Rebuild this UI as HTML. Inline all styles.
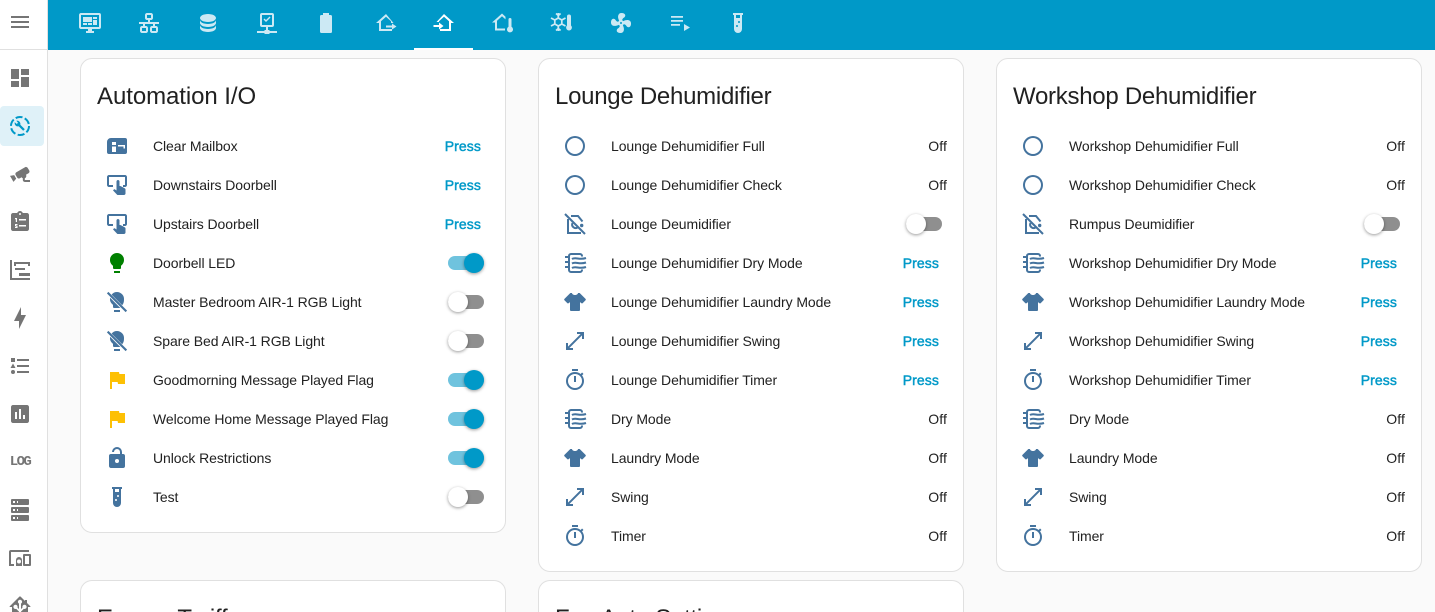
<!DOCTYPE html>
<html lang="en"><head><meta charset="utf-8"><title>Automation I/O</title>
<style>
html,body{margin:0;padding:0;width:1435px;height:612px;overflow:hidden;background:#fafafa;font-family:"Liberation Sans",sans-serif;color:#212121}
#w{position:absolute;left:0;top:0;width:1435px;height:612px;overflow:hidden;background:#fafafa}
#side{position:absolute;left:0;top:0;width:47px;height:612px;background:#fff;border-right:1px solid #e0e0e0;overflow:hidden}
#side svg{position:absolute;left:8px;width:24px;height:24px;fill:#757575}
#sb{position:absolute;left:0;top:49px;width:47px;height:1px;background:#e0e0e0}
#act{position:absolute;left:0;top:106px;width:44px;height:40px;border-radius:4px;background:#dff1f8}
#log{position:absolute;left:8px;top:454px;width:24px;text-align:center;font:bold 14px/16px "Liberation Mono",monospace;letter-spacing:-1.6px;color:#757575}
#ha{position:absolute;left:0;top:594px;width:47px;height:18px;overflow:hidden}
#head{position:absolute;left:48px;top:0;width:1387px;height:50px;background:#0099c8}
#head svg{position:absolute;top:11px;width:24px;height:24px;fill:#cce9f4}
#tab{position:absolute;left:366px;top:48px;width:59px;height:2px;background:#fff}
.c{position:absolute;width:426px;box-sizing:border-box;background:#fff;border:1px solid #e0e0e0;border-radius:12px}
.c.b{top:580px;height:32px;border-bottom:0;border-radius:12px 12px 0 0;overflow:hidden}
.t{position:absolute;left:16px;top:22px;font-size:24px;line-height:32px;white-space:nowrap;letter-spacing:-.27px}
.r{position:absolute;left:0;right:0;height:39px;line-height:39px;font-size:14px}
.r svg{position:absolute;left:24px;top:7px;width:24px;height:24px;fill:#44739e}
.r b{position:absolute;left:72px;font-weight:400;white-space:nowrap;letter-spacing:-.08px}
.r i{position:absolute;right:16px;font-style:normal;letter-spacing:.1px}
.r u{position:absolute;right:24px;text-decoration:none;color:#0099c8;-webkit-text-stroke:.45px #0099c8;letter-spacing:.1px}
.s{position:absolute;right:21px;top:12px;width:36px;height:14px;border-radius:7px;background:#8f8f8f}
.s:after{content:"";position:absolute;left:0;top:-3px;width:20px;height:20px;border-radius:50%;background:#fff;box-shadow:0 1px 3px rgba(0,0,0,.4)}
.s.on{background:#6fc3de}
.s.on:after{left:16px;background:#0099c8}
</style></head><body>
<div id="w">
<svg width="0" height="0" style="position:absolute"><defs>
<symbol id="mail" viewBox="0 0 24 24"><path fill-rule="evenodd" d="M6 4H20A2 2 0 0 1 22 6V18A2 2 0 0 1 20 20H4A2 2 0 0 1 2 18V8A4 4 0 0 1 6 4ZM7 8V11H11V8ZM7 12.500V18H11V12.500ZM13 11V12.500H18.500V14.500H20V11Z"/></symbol>
<symbol id="tap" viewBox="0 0 24 24"><path d="M20 2H4C2.900 2 2 2.900 2 4V12C2 13.110 2.900 14 4 14H8V12H4V4H20V12H18V14H20C21.130 14 22 13.090 22 12V4C22 2.900 21.110 2 20 2Z"/><path d="M20.500 20.500C20.470 21.320 19.820 21.970 19 22H13C12.620 22 12.260 21.850 12 21.570L8 17.370L8.740 16.600C8.930 16.390 9.200 16.280 9.500 16.280H9.700L11.500 17.500V8.500C11.500 7.700 12.200 7 13 7S14.500 7.700 14.500 8.500V13L15.700 13.100L19.650 15.290C20.180 15.530 20.500 16.060 20.500 16.640Z"/></symbol>
<symbol id="bulb" viewBox="0 0 24 24"><path d="M12 2A7 7 0 0 0 5 9C5 11.380 6.190 13.470 8 14.740V17A1 1 0 0 0 9 18H15A1 1 0 0 0 16 17V14.740C17.810 13.470 19 11.380 19 9A7 7 0 0 0 12 2ZM9 20V22H15V20Z"/></symbol>
<symbol id="bulboff" viewBox="0 0 24 24"><path d="M12 2A7 7 0 0 0 6.600 4.600L17.200 15.200C18.300 13.900 19 12.500 19 9.500A7 7 0 0 0 12 2ZM5.100 7.700C4.500 10.800 6 13.300 8 14.740V17A1 1 0 0 0 9 18H15.300ZM9 20V22H15V20Z"/><path d="M3.400 1.900L22.100 20.600L20.600 22.100L1.900 3.400Z"/></symbol>
<symbol id="flag" viewBox="0 0 24 24"><path d="M14.400 6L14 4H5V21H7V14H12.600L13 16H20V6Z"/></symbol>
<symbol id="lock" viewBox="0 0 24 24"><path d="M18 8A2 2 0 0 1 20 10V20A2 2 0 0 1 18 22H6C4.890 22 4 21.100 4 20V10A2 2 0 0 1 6 8H15V6A3 3 0 0 0 12 3A3 3 0 0 0 9 6H7A5 5 0 0 1 12 1A5 5 0 0 1 17 6V8ZM12 17A2 2 0 0 0 14 15A2 2 0 0 0 12 13A2 2 0 0 0 10 15A2 2 0 0 0 12 17Z"/></symbol>
<symbol id="tube" viewBox="0 0 24 24"><path d="M7 2V4H8V18A4 4 0 0 0 12 22A4 4 0 0 0 16 18V4H17V2ZM11 16C10.400 16 10 15.600 10 15C10 14.400 10.400 14 11 14C11.600 14 12 14.400 12 15C12 15.600 11.600 16 11 16ZM13 12C12.400 12 12 11.600 12 11C12 10.400 12.400 10 13 10C13.600 10 14 10.400 14 11C14 11.600 13.600 12 13 12ZM14 7H10V4H14Z"/></symbol>
<symbol id="circ" viewBox="0 0 24 24"><path d="M12 20A8 8 0 0 1 4 12A8 8 0 0 1 12 4A8 8 0 0 1 20 12A8 8 0 0 1 12 20ZM12 2A10 10 0 0 0 2 12A10 10 0 0 0 12 22A10 10 0 0 0 22 12A10 10 0 0 0 12 2Z"/></symbol>
<symbol id="humoff" viewBox="0 0 24 24"><g fill="none" stroke="#44739e" stroke-width="2"><path d="M2 2L22 22"/><path d="M5 7V21H18"/><path d="M8 4H15L19.500 9.500"/><path d="M9.500 11A3.500 3.500 0 0 0 14.500 15.500"/></g><circle cx="18.700" cy="13.500" r="1.700" fill="#44739e"/></symbol>
<symbol id="dry" viewBox="0 0 24 24"><g fill="none" stroke="#44739e" stroke-width="2"><path d="M19 5.500V5A2 2 0 0 0 17 3H8A2 2 0 0 0 6 5V19A2 2 0 0 0 8 21H17A2 2 0 0 0 19 19V18.500"/><path d="M2 6H6M2 11H6M2 16H6"/><path d="M9 8C13 5.500 16 9.500 23 7M9 12.500C13 10 16 14 23 11.500M9 17C13 14.500 16 18.500 23 16"/></g></symbol>
<symbol id="shirt" viewBox="0 0 24 24"><path d="M16 21H8A1 1 0 0 1 7 20V12.070L5.700 13.070C5.310 13.460 4.680 13.460 4.290 13.070L1.460 10.290C1.070 9.900 1.070 9.270 1.460 8.880L7.340 3H9C9 4.100 10.340 5 12 5C13.660 5 15 4.100 15 3H16.660L22.540 8.880C22.930 9.270 22.930 9.900 22.540 10.290L19.710 13.120C19.320 13.500 18.690 13.500 18.300 13.120L17 12.120V20A1 1 0 0 1 16 21Z"/></symbol>
<symbol id="swing" viewBox="0 0 24 24"><path d="M5 17.590L17.590 5H14V3H21V10H19V6.410L6.410 19H10V21H3V14H5Z"/></symbol>
<symbol id="timer" viewBox="0 0 24 24"><path d="M12 20A7 7 0 0 1 5 13A7 7 0 0 1 12 6A7 7 0 0 1 19 13A7 7 0 0 1 12 20ZM19.030 7.390L20.450 5.970C20 5.460 19.550 5 19.040 4.560L17.620 6C16.070 4.740 14.120 4 12 4A9 9 0 0 0 3 13A9 9 0 0 0 12 22C17 22 21 17.970 21 13C21 10.880 20.260 8.930 19.030 7.390ZM11 14H13V8H11ZM15 1H9V3H15Z"/></symbol>
</defs></svg>

<div id="head">
<svg style="left:30px" viewBox="0 0 24 24"><path d="M21 16V4H3V16ZM21 2A2 2 0 0 1 23 4V16A2 2 0 0 1 21 18H14V20H16V22H8V20H10V18H3C1.890 18 1 17.100 1 16V4C1 2.890 1.890 2 3 2ZM5 6H14V11H5ZM15 6H19V8H15ZM19 9V14H15V9ZM5 12H9V14H5ZM10 12H14V14H10Z"/></svg>
<svg style="left:89px" viewBox="0 0 24 24"><path d="M10 2C8.890 2 8 2.890 8 4V7C8 8.110 8.890 9 10 9H11V11H2V13H6V15H5C3.890 15 3 15.890 3 17V20C3 21.110 3.890 22 5 22H9C10.110 22 11 21.110 11 20V17C11 15.890 10.110 15 9 15H8V13H16V15H15C13.890 15 13 15.890 13 17V20C13 21.110 13.890 22 15 22H19C20.110 22 21 21.110 21 20V17C21 15.890 20.110 15 19 15H18V13H22V11H13V9H14C15.110 9 16 8.110 16 7V4C16 2.890 15.110 2 14 2ZM10 4H14V7H10ZM5 17H9V20H5ZM15 17H19V20H15Z"/></svg>
<svg style="left:148px" viewBox="0 0 24 24"><path d="M12 3C7.580 3 4 4.790 4 7C4 9.210 7.580 11 12 11C16.420 11 20 9.210 20 7C20 4.790 16.420 3 12 3ZM4 9V12C4 14.210 7.580 16 12 16C16.420 16 20 14.210 20 12V9C20 11.210 16.420 13 12 13C7.580 13 4 11.210 4 9ZM4 14V17C4 19.210 7.580 21 12 21C16.420 21 20 19.210 20 17V14C20 16.210 16.420 18 12 18C7.580 18 4 16.210 4 14Z"/></svg>
<svg style="left:207px" viewBox="0 0 24 24"><path fill-rule="evenodd" d="M7 2H17A2 2 0 0 1 19 4V14A2 2 0 0 1 17 16H13V19H14L15 20H22V22H15L14 23H10L9 22H2V20H9L10 19H11V16H7A2 2 0 0 1 5 14V4A2 2 0 0 1 7 2ZM7 4V14H17V4ZM8.500 8.500L11 11L15.500 6.500L14.500 5.500L11 9L9.500 7.500Z"/></svg>
<svg style="left:266px" viewBox="0 0 24 24"><path d="M16.670 4H15V2H9V4H7.330A1.330 1.330 0 0 0 6 5.330V20.670C6 21.400 6.600 22 7.330 22H16.670A1.330 1.330 0 0 0 18 20.670V5.330C18 4.600 17.400 4 16.670 4Z"/></svg>
<svg style="left:326px" viewBox="0 0 24 24"><path d="M12 3L2 12H5V20H18V18H7V10.190L12 5.690L17 10.190V12H19.500ZM18 12.500V14.500H12V16.500H18V18.500L22.500 15.500Z"/></svg>
<svg style="left:384px;fill:#fff" viewBox="0 0 24 24"><path d="M12 3L22 12H19V20H8V18H17V10.190L12 5.690L7 10.190V11H4.500ZM7 11.500V14H1.500V16H7V18.500L11.500 15Z"/></svg>
<svg style="left:443px" viewBox="0 0 24 24"><path d="M11 2.500L1 11.500H4V19.500H14V17.500H6V9.690L11 5.190L14.500 8.400V5.700ZM19 7A1.500 1.500 0 0 0 17.500 8.500V15.800A3 3 0 1 0 20.500 15.800V8.500A1.500 1.500 0 0 0 19 7Z"/></svg>
<svg style="left:502px" viewBox="0 0 24 24"><path fill="none" stroke="#cce9f4" stroke-width="1.700" d="M8.300 7L11.800 9V13L8.300 15L4.800 13V9ZM8.300 2V7M8.300 15V20M4.800 9L1 7M11.800 9L15.500 7M4.800 13L1 15M11.800 13L15.500 15M6 2.500L8.300 4.500L10.600 2.500M6 19.500L8.300 17.500L10.600 19.500"/><path d="M19 3.500A2 2 0 0 0 17 5.500V14.500A2.900 2.900 0 1 0 21 14.500V5.500A2 2 0 0 0 19 3.500Z"/></svg>
<svg style="left:561px" viewBox="0 0 24 24"><path d="M12 11A1 1 0 0 0 11 12A1 1 0 0 0 12 13A1 1 0 0 0 13 12A1 1 0 0 0 12 11ZM12.500 2C17 2 17.110 5.570 14.750 6.750C13.760 7.240 13.320 8.290 13.130 9.220C13.610 9.420 14.030 9.730 14.350 10.130C18.050 8.130 22.030 8.920 22.030 12.500C22.030 17 18.460 17.100 17.280 14.730C16.780 13.740 15.720 13.300 14.790 13.110C14.590 13.590 14.280 14 13.880 14.340C15.870 18.030 15.080 22 11.500 22C7 22 6.910 18.420 9.270 17.240C10.250 16.750 10.690 15.710 10.890 14.790C10.400 14.590 9.970 14.270 9.650 13.870C5.960 15.850 2 15.070 2 11.500C2 7 5.560 6.890 6.740 9.260C7.240 10.250 8.290 10.680 9.220 10.870C9.410 10.390 9.730 9.970 10.140 9.650C8.150 5.960 8.940 2 12.500 2Z"/></svg>
<svg style="left:620px" viewBox="0 0 24 24"><path d="M3 5H15V6.700H3ZM3 9H15V10.700H3ZM3 13H12V14.700H3ZM16 13V20L22 16.500Z"/></svg>
<svg style="left:678px" viewBox="0 0 24 24"><path d="M7 2V4H8V18A4 4 0 0 0 12 22A4 4 0 0 0 16 18V4H17V2ZM11 16C10.400 16 10 15.600 10 15C10 14.400 10.400 14 11 14C11.600 14 12 14.400 12 15C12 15.600 11.600 16 11 16ZM13 12C12.400 12 12 11.600 12 11C12 10.400 12.400 10 13 10C13.600 10 14 10.400 14 11C14 11.600 13.600 12 13 12ZM14 7H10V4H14Z"/></svg>
<div id="tab"></div>
</div>

<div id="side">
<div id="sb"></div>
<div id="act"></div>
<svg style="top:10px" viewBox="0 0 24 24"><path d="M3 6H21V8H3ZM3 11H21V13H3ZM3 16H21V18H3Z"/></svg>
<svg style="top:66px" viewBox="0 0 24 24"><path d="M13 3V9H21V3ZM13 21H21V11H13ZM3 21H11V15H3ZM3 13H11V3H3Z"/></svg>
<svg style="top:114px;fill:#0099c8" viewBox="0 0 24 24"><circle cx="12" cy="12" r="9" fill="none" stroke="#0099c8" stroke-width="2" stroke-dasharray="7 2.420"/><path d="M8.300 6.800A3.200 3.200 0 0 1 12.300 10.700L16.800 15.200L15.200 16.800L10.700 12.300A3.200 3.200 0 0 1 6.800 8.300L8.800 10L10 8.800Z"/></svg>
<svg style="top:162px" viewBox="0 0 24 24"><path d="M18.150 4.940C17.770 4.910 17.370 5 17 5.200L8.350 10.200C7.390 10.760 7.060 12 7.620 12.940L9.120 15.530C9.670 16.500 10.890 16.820 11.850 16.270L13.650 15.230C13.920 15.690 14.320 16.060 14.810 16.270V18.040C14.810 19.130 15.700 20 16.810 20H22V18.040H16.810V16.270C17.720 15.870 18.310 14.970 18.310 14C18.310 13.540 18.190 13.110 17.970 12.730L20.500 11.270C21.460 10.710 21.790 9.500 21.240 8.530L19.740 5.940C19.400 5.340 18.790 5 18.150 4.940ZM6.220 13.170L2 13.870L2.750 15.170L4.750 18.630L5.500 19.930L8.220 16.630Z"/></svg>
<svg style="top:210px" viewBox="0 0 24 24"><path fill-rule="evenodd" d="M19 3H14.820C14.400 1.840 13.300 1 12 1S9.600 1.840 9.180 3H5C3.900 3 3 3.900 3 5V19C3 20.100 3.900 21 5 21H19C20.100 21 21 20.100 21 19V5C21 3.900 20.100 3 19 3ZM12 3C12.550 3 13 3.450 13 4S12.550 5 12 5 11 4.550 11 4 11.450 3 12 3ZM7 8H9V12H7.800V9.200H7ZM11 9H18V10.500H11ZM7 14H9.500V15H8.200V15.600H9.500V18H7V17H8.300V16.400H7ZM11 15H18V16.500H11Z"/></svg>
<svg style="top:258px" viewBox="0 0 24 24"><path d="M2 2H4V20H22V22H2ZM6 4H22V8H20V6H8V8H6ZM7 10H17V12H7ZM11 15H22V18H11Z"/></svg>
<svg style="top:306px" viewBox="0 0 24 24"><path d="M11 15H6L13 1V9H18L11 23Z"/></svg>
<svg style="top:354px" viewBox="0 0 24 24"><path d="M5 9.500L7.500 14H2.500ZM3 4H7V8H3ZM5 20A2 2 0 0 0 7 18A2 2 0 0 0 5 16A2 2 0 0 0 3 18A2 2 0 0 0 5 20ZM9 5V7H21V5ZM9 19H21V17H9ZM9 13H21V11H9Z"/></svg>
<svg style="top:402px" viewBox="0 0 24 24"><path d="M19 3H5C3.900 3 3 3.900 3 5V19C3 20.100 3.900 21 5 21H19C20.100 21 21 20.100 21 19V5C21 3.900 20.100 3 19 3ZM9 17H7V10H9ZM13 17H11V7H13ZM17 17H15V13H17Z"/></svg>
<div id="log">LOG</div>
<svg style="top:498px" viewBox="0 0 24 24"><path d="M4 1H20A1 1 0 0 1 21 2V6A1 1 0 0 1 20 7H4A1 1 0 0 1 3 6V2A1 1 0 0 1 4 1ZM4 9H20A1 1 0 0 1 21 10V14A1 1 0 0 1 20 15H4A1 1 0 0 1 3 14V10A1 1 0 0 1 4 9ZM4 17H20A1 1 0 0 1 21 18V22A1 1 0 0 1 20 23H4A1 1 0 0 1 3 22V18A1 1 0 0 1 4 17ZM9 5H10V3H9ZM9 13H10V11H9ZM9 21H10V19H9ZM5 3V5H7V3ZM5 11V13H7V11ZM5 19V21H7V19Z"/></svg>
<svg style="top:546px" viewBox="0 0 24 24"><path fill-rule="evenodd" d="M3 4H21V6H3V18H6V20H1V6A2 2 0 0 1 3 4ZM16 8H22A1 1 0 0 1 23 9V19A1 1 0 0 1 22 20H16A1 1 0 0 1 15 19V9A1 1 0 0 1 16 8ZM17 10V18H21V10ZM11 11A3 3 0 0 1 14 14V20H8V14A3 3 0 0 1 11 11ZM11 13.500A2 2 0 1 0 11 17.500A2 2 0 1 0 11 13.500Z"/></svg>
<div id="ha"><svg style="top:0" viewBox="0 0 24 24"><path d="M21.800 13H20V21H13V17.670L15.790 14.880L16.500 15C17.660 15 18.600 14.060 18.600 12.900C18.600 11.740 17.660 10.800 16.500 10.800A2.100 2.100 0 0 0 14.400 12.900L14.500 13.610L13 15.130V9.650C13.660 9.290 14.100 8.600 14.100 7.800A2.100 2.100 0 0 0 12 5.700A2.100 2.100 0 0 0 9.900 7.800C9.900 8.600 10.340 9.290 11 9.650V15.130L9.500 13.610L9.600 12.900A2.100 2.100 0 0 0 7.500 10.800A2.100 2.100 0 0 0 5.400 12.900A2.100 2.100 0 0 0 7.500 15L8.210 14.880L11 17.670V21H4V13H2.250C1.830 13 1.420 13 1.420 12.790C1.430 12.570 1.850 12.150 2.280 11.720L11 3C11.330 2.670 11.670 2.330 12 2.330C12.330 2.330 12.670 2.670 13 3L17 7V6H19V9L21.780 11.780C22.180 12.180 22.590 12.590 22.600 12.800C22.600 13 22.200 13 21.800 13Z"/></svg></div>
</div>

<div class="c" style="left:80px;top:58px;height:475px">
<div class="t" style="letter-spacing:-.07px">Automation I/O</div>
<div class="r" style="top:68px"><svg><use href="#mail"/></svg><b>Clear Mailbox</b><u>Press</u></div>
<div class="r" style="top:107px"><svg><use href="#tap"/></svg><b>Downstairs Doorbell</b><u>Press</u></div>
<div class="r" style="top:146px"><svg><use href="#tap"/></svg><b>Upstairs Doorbell</b><u>Press</u></div>
<div class="r" style="top:185px"><svg style="fill:#008000"><use href="#bulb"/></svg><b>Doorbell LED</b><div class="s on"></div></div>
<div class="r" style="top:224px"><svg><use href="#bulboff"/></svg><b>Master Bedroom AIR-1 RGB Light</b><div class="s"></div></div>
<div class="r" style="top:263px"><svg><use href="#bulboff"/></svg><b>Spare Bed AIR-1 RGB Light</b><div class="s"></div></div>
<div class="r" style="top:302px"><svg style="fill:#fdc004"><use href="#flag"/></svg><b>Goodmorning Message Played Flag</b><div class="s on"></div></div>
<div class="r" style="top:341px"><svg style="fill:#fdc004"><use href="#flag"/></svg><b>Welcome Home Message Played Flag</b><div class="s on"></div></div>
<div class="r" style="top:380px"><svg><use href="#lock"/></svg><b>Unlock Restrictions</b><div class="s on"></div></div>
<div class="r" style="top:419px"><svg><use href="#tube"/></svg><b>Test</b><div class="s"></div></div>
</div>

<div class="c" style="left:538px;top:58px;height:514px">
<div class="t">Lounge Dehumidifier</div>
<div class="r" style="top:68px"><svg><use href="#circ"/></svg><b>Lounge Dehumidifier Full</b><i>Off</i></div>
<div class="r" style="top:107px"><svg><use href="#circ"/></svg><b>Lounge Dehumidifier Check</b><i>Off</i></div>
<div class="r" style="top:146px"><svg><use href="#humoff"/></svg><b>Lounge Deumidifier</b><div class="s"></div></div>
<div class="r" style="top:185px"><svg><use href="#dry"/></svg><b>Lounge Dehumidifier Dry Mode</b><u>Press</u></div>
<div class="r" style="top:224px"><svg><use href="#shirt"/></svg><b>Lounge Dehumidifier Laundry Mode</b><u>Press</u></div>
<div class="r" style="top:263px"><svg><use href="#swing"/></svg><b>Lounge Dehumidifier Swing</b><u>Press</u></div>
<div class="r" style="top:302px"><svg><use href="#timer"/></svg><b>Lounge Dehumidifier Timer</b><u>Press</u></div>
<div class="r" style="top:341px"><svg><use href="#dry"/></svg><b>Dry Mode</b><i>Off</i></div>
<div class="r" style="top:380px"><svg><use href="#shirt"/></svg><b>Laundry Mode</b><i>Off</i></div>
<div class="r" style="top:419px"><svg><use href="#swing"/></svg><b>Swing</b><i>Off</i></div>
<div class="r" style="top:458px"><svg><use href="#timer"/></svg><b>Timer</b><i>Off</i></div>
</div>

<div class="c" style="left:996px;top:58px;height:514px">
<div class="t">Workshop Dehumidifier</div>
<div class="r" style="top:68px"><svg><use href="#circ"/></svg><b>Workshop Dehumidifier Full</b><i>Off</i></div>
<div class="r" style="top:107px"><svg><use href="#circ"/></svg><b>Workshop Dehumidifier Check</b><i>Off</i></div>
<div class="r" style="top:146px"><svg><use href="#humoff"/></svg><b>Rumpus Deumidifier</b><div class="s"></div></div>
<div class="r" style="top:185px"><svg><use href="#dry"/></svg><b>Workshop Dehumidifier Dry Mode</b><u>Press</u></div>
<div class="r" style="top:224px"><svg><use href="#shirt"/></svg><b>Workshop Dehumidifier Laundry Mode</b><u>Press</u></div>
<div class="r" style="top:263px"><svg><use href="#swing"/></svg><b>Workshop Dehumidifier Swing</b><u>Press</u></div>
<div class="r" style="top:302px"><svg><use href="#timer"/></svg><b>Workshop Dehumidifier Timer</b><u>Press</u></div>
<div class="r" style="top:341px"><svg><use href="#dry"/></svg><b>Dry Mode</b><i>Off</i></div>
<div class="r" style="top:380px"><svg><use href="#shirt"/></svg><b>Laundry Mode</b><i>Off</i></div>
<div class="r" style="top:419px"><svg><use href="#swing"/></svg><b>Swing</b><i>Off</i></div>
<div class="r" style="top:458px"><svg><use href="#timer"/></svg><b>Timer</b><i>Off</i></div>
</div>

<div class="c b" style="left:80px"><div class="t">Energy Tariffs</div></div>
<div class="c b" style="left:538px"><div class="t">Fan Auto Settings</div></div>
</div>
</body></html>
